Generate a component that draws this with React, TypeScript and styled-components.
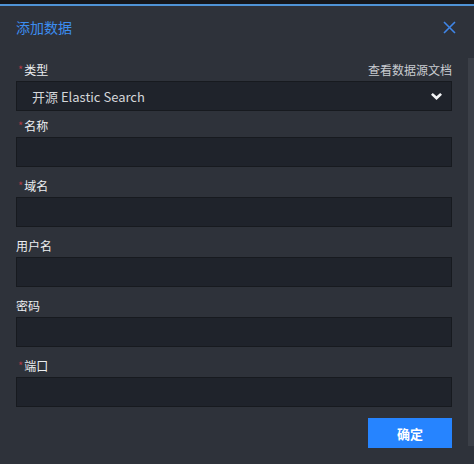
import styled, { createGlobalStyle } from "styled-components";

const GlobalStyle = createGlobalStyle`
  html, body {
    margin: 0;
    padding: 0;
    background: #14161a;
  }
  * { box-sizing: border-box; }
`;

const Shell = styled.div`
  width: 474px;
  height: 464px;
  display: flex;
  flex-direction: column;
  background: #121418;
  font-family: "Microsoft YaHei", "Noto Sans CJK SC", "Liberation Sans", sans-serif;
`;

const TopStrip = styled.div`
  height: 6px;
  background: #15171b;
  border-bottom: 2px solid #4f93d6;
`;

const Body = styled.div`
  flex: 1;
  display: flex;
`;

const Dialog = styled.section`
  flex: 1;
  background: #2e323a;
  padding: 0 16px;
  display: flex;
  flex-direction: column;
`;

const ScrollTrack = styled.div`
  width: 6px;
  background: #2e323a;
  display: flex;
  flex-direction: column;
`;

const ScrollThumb = styled.div`
  margin-top: 52px;
  height: 388px;
  background: #3b3f47;
`;

const Header = styled.header`
  height: 42px;
  display: flex;
  align-items: center;
  justify-content: space-between;
`;

const Title = styled.h2`
  margin: 0;
  font-size: 14px;
  font-weight: 400;
  color: #3c8df0;
`;

const CloseButton = styled.button`
  border: none;
  background: none;
  padding: 0;
  margin-right: -5px;
  width: 16px;
  height: 16px;
  display: grid;
  place-items: center;
  cursor: pointer;
`;

const Form = styled.div`
  margin-top: 11px;
  display: flex;
  flex-direction: column;
  gap: 8px;
`;

const Field = styled.div<{ $tight?: boolean }>`
  display: flex;
  flex-direction: column;
  gap: 2px;
  margin-bottom: ${(p) => (p.$tight ? "-4px" : "0")};
`;

const LabelRow = styled.div`
  height: 20px;
  display: flex;
  align-items: center;
  justify-content: space-between;
`;

const Label = styled.label<{ $required?: boolean }>`
  font-size: 12px;
  color: #eceef1;
  display: flex;
  align-items: center;

  &::before {
    content: ${(p) => (p.$required ? '"*"' : "none")};
    color: #b03a45;
    font-size: 11px;
    margin: 0 1px 0 2px;
  }
`;

const DocLink = styled.a`
  font-size: 12px;
  color: #c9ccd1;
  text-decoration: none;
`;

const Box = styled.div`
  height: 30px;
  background: #1f232b;
  border: 1px solid #171a1f;
  display: flex;
  align-items: center;
  justify-content: space-between;
  padding: 0 9px 0 15px;
  font-size: 13px;
  color: #d4d6da;
`;

const Footer = styled.div`
  margin-top: 11px;
  display: flex;
  justify-content: flex-end;
`;

const Primary = styled.button`
  width: 84px;
  height: 30px;
  border: none;
  background: #2684ff;
  color: #ffffff;
  font-family: inherit;
  font-size: 13px;
  font-weight: 700;
  cursor: pointer;
`;

const fields = [
  { label: "名称", required: true },
  { label: "域名", required: true },
  { label: "用户名", required: false },
  { label: "密码", required: false },
  { label: "端口", required: true },
];

export default function App() {
  return (
    <>
      <GlobalStyle />
      <Shell>
        <TopStrip />
        <Body>
          <Dialog>
            <Header>
              <Title>添加数据</Title>
              <CloseButton aria-label="关闭">
                <svg width="13" height="13" viewBox="0 0 13 13">
                  <path
                    d="M1 1 L12 12 M12 1 L1 12"
                    stroke="#3f86e8"
                    strokeWidth="1.6"
                    fill="none"
                  />
                </svg>
              </CloseButton>
            </Header>
            <Form>
              <Field $tight>
                <LabelRow>
                  <Label $required>类型</Label>
                  <DocLink href="#">查看数据源文档</DocLink>
                </LabelRow>
                <Box>
                  <span>开源 Elastic Search</span>
                  <svg width="11" height="7" viewBox="0 0 11 7">
                    <path d="M0 1.8 L1.8 0 L5.5 3.2 L9.2 0 L11 1.8 L5.5 7 Z" fill="#f2f3f5" />
                  </svg>
                </Box>
              </Field>
              {fields.map((f) => (
                <Field key={f.label}>
                  <LabelRow>
                    <Label $required={f.required}>{f.label}</Label>
                  </LabelRow>
                  <Box />
                </Field>
              ))}
            </Form>
            <Footer>
              <Primary>确定</Primary>
            </Footer>
          </Dialog>
          <ScrollTrack>
            <ScrollThumb />
          </ScrollTrack>
        </Body>
      </Shell>
    </>
  );
}
